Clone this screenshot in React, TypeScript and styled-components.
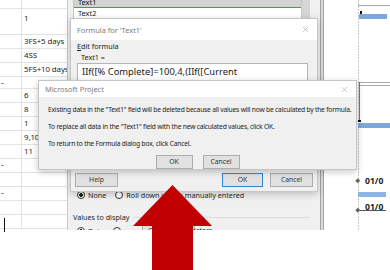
import React from 'react'
import styled, { createGlobalStyle } from 'styled-components'
import { X } from 'lucide-react'

const UI_FONT = `"Noto Sans", "Open Sans", "Liberation Sans", sans-serif`

const GlobalStyle = createGlobalStyle`
  html, body {
    margin: 0;
    padding: 0;
    background: #fff;
  }
  body {
    font-family: ${UI_FONT};
    color: #1e1e1e;
  }
`

const Screen = styled.div`
  position: relative;
  width: 390px;
  height: 270px;
  overflow: hidden;
  background: #fff;
`

// the captured Project window, cut off at the bottom
const Capture = styled.div`
  display: flex;
  height: 230px;
  overflow: hidden;
`

/* ---------- task sheet on the left ---------- */

const Sheet = styled.div`
  width: 67px;
  flex: none;
  display: flex;
  flex-direction: column;
`

const SheetRow = styled.div<{ $h: number }>`
  display: grid;
  grid-template-columns: 22px 1fr;
  height: ${p => p.$h}px;
  flex: none;
  box-sizing: border-box;
  border-bottom: 1px solid #e2e2e2;
`

const IdCell = styled.div<{ $mark?: boolean }>`
  border-right: 1px solid #e2e2e2;
  position: relative;

  &::before {
    content: '';
    display: ${p => (p.$mark ? 'block' : 'none')};
    position: absolute;
    left: 1px;
    top: 6px;
    width: 3px;
    height: 1px;
    background: #9a9a9a;
  }
`

const PredCell = styled.div<{ $top?: number }>`
  font-size: 7.9px;
  letter-spacing: -0.1px;
  line-height: 13px;
  padding: ${p => p.$top ?? 0}px 0 0 2px;
  white-space: nowrap;
  overflow: hidden;
  color: #262626;
`

/* ---------- customize fields panel ---------- */

const FieldsPanel = styled.div`
  width: 253px;
  flex: none;
  box-sizing: border-box;
  background: #f0f0f0;
  border-left: 1px solid #c9c9c9;
  padding: 0 10px 0 5px;
  display: flex;
  flex-direction: column;
`

const FieldList = styled.div`
  height: 20px;
  flex: none;
  display: flex;
  background: #fff;
  border-left: 1px solid #c4c4c4;
`

const FieldItems = styled.div`
  flex: 1;
  display: flex;
  flex-direction: column;
`

const FieldItem = styled.div<{ $selected?: boolean; $h: number }>`
  height: ${p => p.$h}px;
  box-sizing: border-box;
  padding-left: 4px;
  font-size: 7.4px;
  line-height: ${p => (p.$selected ? 4 : 11)}px;
  overflow: hidden;
  background: ${p => (p.$selected ? '#d3d3d3' : 'transparent')};
  border-bottom: ${p => (p.$selected ? '1px solid #4f9a4f' : 'none')};
  color: #222;
`

const ListScroll = styled.div`
  width: 8px;
  background: #d6d6d6;
  border-left: 1px solid #c8c8c8;
`

const PanelGap = styled.div`
  height: 168px;
  flex: none;
`

const OptionRow = styled.div`
  display: flex;
  flex: none;
  align-items: center;
  gap: 3px;
  height: 14px;
  padding-left: 4px;
  font-size: 7.2px;
  color: #262626;
  white-space: nowrap;
`

const Radio = styled.span<{ $on?: boolean }>`
  width: 6px;
  height: 6px;
  flex: none;
  border-radius: 50%;
  border: 1px solid #333;
  background: ${p => (p.$on ? 'radial-gradient(circle, #222 0 1.6px, #fff 2px)' : '#fff')};
  margin-left: ${p => (p.$on ? 0 : 6)}px;
`

const GroupLabel = styled.div`
  display: flex;
  flex: none;
  align-items: center;
  gap: 4px;
  height: 14px;
  margin-top: 8px;
  font-size: 7.2px;
  color: #262626;
  white-space: nowrap;

  &::after {
    content: '';
    flex: 1;
    height: 1px;
    background: #dcdcdc;
  }
`

const SmallButton = styled.span`
  margin-left: 18px;
  height: 12px;
  width: 46px;
  border: 1px solid #adadad;
  background: #e1e1e1;
  font-size: 6.8px;
  line-height: 12px;
  padding-left: 5px;
`

const Splitter = styled.div`
  width: 4px;
  flex: none;
  box-sizing: border-box;
  border-left: 1px solid #a6a6a6;
  border-right: 1px solid #a6a6a6;
  background: #d9d9d9;
`

const Gantt = styled.div`
  flex: 1;
  background: #fff;
`

/* ---------- dialog windows ---------- */

const Window = styled.div<{ $x: number; $y: number; $w: number; $h: number }>`
  position: absolute;
  left: ${p => p.$x}px;
  top: ${p => p.$y}px;
  width: ${p => p.$w}px;
  height: ${p => p.$h}px;
  box-sizing: border-box;
  background: #f0f0f0;
  border: 1px solid #c6c6c6;
  box-shadow: 0 2px 7px rgba(0, 0, 0, 0.22);
  display: flex;
  flex-direction: column;
`

const TitleBar = styled.div<{ $h: number }>`
  height: ${p => p.$h}px;
  flex: none;
  background: #fff;
  display: flex;
  align-items: center;
  justify-content: space-between;
  padding: 0 7px 0 6px;
  font-size: 7.4px;
  color: #7b7b7b;
`

const Body = styled.div`
  flex: 1;
  display: flex;
  flex-direction: column;
  padding: 1px 4px 4px;
`

const FieldLabel = styled.div<{ $indent?: number }>`
  height: 11px;
  line-height: 11px;
  padding-left: ${p => p.$indent ?? 2}px;
  font-size: 7.2px;
  color: #222;

  u {
    text-decoration-thickness: 0.6px;
  }
`

const FormulaBox = styled.div`
  height: 18px;
  margin: 0 5px 0 2px;
  box-sizing: border-box;
  border: 1px solid #b5b5b5;
  background: #fff;
  padding-left: 4px;
  font-size: 9.4px;
  line-height: 16px;
  color: #1b1b1b;
  white-space: nowrap;
  overflow: hidden;
`

const Filler = styled.div`
  flex: 1;
`

const ButtonRow = styled.div<{ $center?: boolean }>`
  display: flex;
  justify-content: ${p => (p.$center ? 'center' : 'space-between')};
  gap: 10px;
  margin-top: ${p => (p.$center ? 3 : 0)}px;
`

const ButtonPair = styled.div`
  display: flex;
  gap: 7px;
`

const Button = styled.div<{ $w: number; $focus?: boolean }>`
  width: ${p => p.$w}px;
  height: 14px;
  box-sizing: border-box;
  border: 1px solid ${p => (p.$focus ? '#2b86d8' : '#adadad')};
  background: #e1e1e1;
  font-size: 6.8px;
  line-height: 12px;
  text-align: center;
  color: #333;
`

const MessageBody = styled.div`
  flex: 1;
  display: flex;
  flex-direction: column;
  padding: 4px 9px 0;
`

const MessageLine = styled.p`
  margin: 0;
  height: 17px;
  line-height: 17px;
  font-size: 6.7px;
  letter-spacing: -0.2px;
  white-space: nowrap;
  color: #222;
`

const Overlay = styled.svg`
  position: absolute;
  left: 0;
  top: 0;
  pointer-events: none;
`

const Caret = styled.div`
  position: absolute;
  left: 4px;
  top: 218px;
  width: 1px;
  height: 14px;
  background: #111;
`

const rows: { h: number; text?: string; top?: number; mark?: boolean }[] = [
  { h: 9 },
  { h: 26, text: '1', top: 3 },
  { h: 14, text: '3FS+5 days' },
  { h: 14, text: '4SS' },
  { h: 14, text: '5FS+10 days' },
  { h: 12, mark: true },
  { h: 14, text: '6' },
  { h: 14, text: '8' },
  { h: 14, text: '1' },
  { h: 14, text: '9,10' },
  { h: 14, text: '11' },
  { h: 14, mark: true },
  { h: 14 },
  { h: 14, mark: true },
  { h: 14 },
  { h: 14 },
  { h: 14 },
]

const GanttChart: React.FC = () => (
  <svg width="66" height="230" viewBox="0 0 66 230">
    <line x1="34.5" y1="0" x2="34.5" y2="230" stroke="#c8c8c8" strokeDasharray="2 1" />
    <line x1="34" y1="5.5" x2="66" y2="5.5" stroke="#a9a9a9" />
    <rect x="36" y="11" width="2" height="3" fill="#111" />
    <rect x="35" y="14" width="28" height="5" fill="#7ba7dd" />
    <line x1="34" y1="82.5" x2="66" y2="82.5" stroke="#a9a9a9" />
    <line x1="34" y1="85.5" x2="66" y2="85.5" stroke="#a9a9a9" />
    <line x1="35.5" y1="82" x2="35.5" y2="122" stroke="#777" />
    <rect x="34" y="120" width="3" height="2" fill="#111" />
    <rect x="34" y="123" width="32" height="5" fill="#7ba7dd" />
    <rect x="32" y="179" width="3.5" height="3.5" fill="#666" transform="rotate(45 33.75 180.75)" />
    <text x="41" y="183.5" fontSize="8.6" fontWeight="700" fill="#222" fontFamily="Noto Sans, sans-serif">
      01/0
    </text>
    <rect x="34" y="192" width="28" height="5" fill="#8db4e4" />
    <text x="41" y="209.5" fontSize="8.6" fontWeight="700" fill="#222" fontFamily="Noto Sans, sans-serif">
      01/0
    </text>
    <line x1="33" y1="210.5" x2="62" y2="210.5" stroke="#555" />
    <rect x="32" y="208.5" width="3.5" height="3.5" fill="#666" transform="rotate(45 33.75 210.25)" />
  </svg>
)

const App: React.FC = () => (
  <Screen>
    <GlobalStyle />
    <Capture>
      <Sheet>
        {rows.map((r, i) => (
          <SheetRow key={i} $h={r.h}>
            <IdCell $mark={r.mark} />
            <PredCell $top={r.top}>{r.text}</PredCell>
          </SheetRow>
        ))}
      </Sheet>

      <FieldsPanel>
        <FieldList>
          <FieldItems>
            <FieldItem $selected $h={8}>Text1</FieldItem>
            <FieldItem $h={11}>Text2</FieldItem>
          </FieldItems>
          <ListScroll />
        </FieldList>
        <PanelGap />
        <OptionRow>
          <Radio $on />
          None
          <Radio />
          Roll down unless manually entered
        </OptionRow>
        <GroupLabel>Values to display</GroupLabel>
        <OptionRow>
          <Radio $on />
          Data
          <Radio />
          <SmallButton>Graphical Indicators...</SmallButton>
        </OptionRow>
      </FieldsPanel>

      <Splitter />
      <Gantt>
        <GanttChart />
      </Gantt>
    </Capture>

    <Window $x={70} $y={18} $w={248} $h={174}>
      <TitleBar $h={21}>
        <span>Formula for 'Text1'</span>
        <X size={9} strokeWidth={1.2} color="#8a8a8a" />
      </TitleBar>
      <Body>
        <FieldLabel>
          <u>E</u>dit formula
        </FieldLabel>
        <FieldLabel $indent={6}>Text1 =</FieldLabel>
        <FormulaBox>IIf([% Complete]=100,4,(IIf([Current</FormulaBox>
        <Filler />
        <ButtonRow>
          <Button $w={43}>Help</Button>
          <ButtonPair>
            <Button $w={41} $focus>
              OK
            </Button>
            <Button $w={43}>Cancel</Button>
          </ButtonPair>
        </ButtonRow>
      </Body>
    </Window>

    <Window $x={38} $y={80} $w={319} $h={90}>
      <TitleBar $h={16}>
        <span>Microsoft Project</span>
        <X size={9} strokeWidth={1.2} color="#8a8a8a" />
      </TitleBar>
      <MessageBody>
        <MessageLine>
          Existing data in the "Text1" field will be deleted because all values will now be calculated by the formula.
        </MessageLine>
        <MessageLine>To replace all data in the "Text1" field with the new calculated values, click OK.</MessageLine>
        <MessageLine>To return to the Formula dialog box, click Cancel.</MessageLine>
        <ButtonRow $center>
          <Button $w={37}>OK</Button>
          <Button $w={37}>Cancel</Button>
        </ButtonRow>
      </MessageBody>
    </Window>

    <Caret />
    <Overlay width="390" height="270" viewBox="0 0 390 270">
      <polygon points="172.5,185 212,226 193,226 193,270 152,270 152,226 133,226" fill="#c00000" />
    </Overlay>
  </Screen>
)

export default App
